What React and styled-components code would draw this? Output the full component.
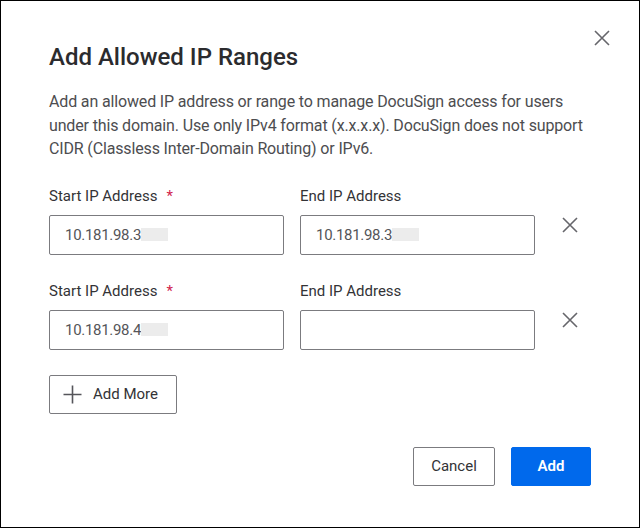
import React from "react";
import styled, { createGlobalStyle } from "styled-components";

const Global = createGlobalStyle`
  html, body { margin: 0; padding: 0; background: #fff; }
  body { font-family: Roboto, "Noto Sans", Arial, sans-serif; }
  * { box-sizing: border-box; }
`;

const Dialog = styled.div`
  position: relative;
  width: 640px;
  height: 528px;
  border: 1px solid #000;
  background: #fff;
  padding: 41px 48px 0 48px;
  display: flex;
  flex-direction: column;
`;

const CloseButton = styled.button`
  position: absolute;
  top: 27px;
  right: 27px;
  width: 20px;
  height: 20px;
  padding: 2px;
  border: 0;
  background: none;
  display: flex;
  align-items: center;
  justify-content: center;
  cursor: pointer;
`;

const Title = styled.h2`
  margin: 0;
  font-size: 24px;
  line-height: 31px;
  font-weight: 500;
  color: #2b2b2e;
`;

const Description = styled.p`
  margin: 17px -6px 0 0;
  font-size: 16px;
  line-height: 23.5px;
  letter-spacing: -0.15px;
  color: #4d4d50;
`;

const RangeGrid = styled.div`
  display: grid;
  grid-template-columns: 235px 235px 20px;
  column-gap: 16px;
  margin-top: ${(p) => p.$top}px;
`;

const Label = styled.label`
  font-size: 15px;
  line-height: 20px;
  color: #333336;
  margin-bottom: 9px;
  display: flex;
  align-items: center;
`;

const Required = styled.span`
  color: #d1244d;
  margin-left: 9px;
  font-size: 15px;
`;

const InputBox = styled.div`
  height: 40px;
  border: 1px solid #7b7b7f;
  border-radius: 2px;
  display: flex;
  align-items: center;
  padding: 0 15px;
  font-size: 15px;
  color: #555559;
  letter-spacing: -0.3px;
`;

const Redacted = styled.span`
  display: inline-block;
  width: 27px;
  height: 13px;
  background: #ececec;
`;

const RemoveButton = styled.button`
  grid-column: 3;
  grid-row: 2;
  align-self: start;
  width: 20px;
  height: 20px;
  margin-left: 9px;
  padding: 2px;
  border: 0;
  background: none;
  display: flex;
  align-items: center;
  justify-content: center;
  cursor: pointer;
`;

const AddMoreButton = styled.button`
  margin-top: 25px;
  align-self: flex-start;
  height: 39px;
  width: 128px;
  border: 1px solid #7b7b7f;
  border-radius: 2px;
  background: #fff;
  display: flex;
  align-items: center;
  gap: 11px;
  padding: 0 0 0 13px;
  font-family: inherit;
  font-size: 15px;
  color: #333336;
  cursor: pointer;
`;

const Footer = styled.div`
  margin-top: 33px;
  display: flex;
  justify-content: flex-end;
  gap: 16px;
`;

const FooterButton = styled.button`
  height: 39px;
  width: ${(p) => (p.$primary ? 80 : 82)}px;
  border-radius: 2px;
  border: 1px solid ${(p) => (p.$primary ? "#0069ec" : "#7b7b7f")};
  background: ${(p) => (p.$primary ? "#0069ec" : "#fff")};
  color: ${(p) => (p.$primary ? "#fff" : "#333336")};
  font-family: inherit;
  font-size: 15px;
  font-weight: ${(p) => (p.$primary ? 600 : 400)};
  cursor: pointer;
`;

const XIcon = ({ size = 16 }) => (
  <svg width={size} height={size} viewBox="0 0 16 16" fill="none">
    <path d="M1 1L15 15M15 1L1 15" stroke="#66666b" strokeWidth="1.6" />
  </svg>
);

const PlusIcon = () => (
  <svg width="19" height="19" viewBox="0 0 19 19" fill="none">
    <path d="M9.5 0.5V18.5M0.5 9.5H18.5" stroke="#55555a" strokeWidth="1.6" />
  </svg>
);

const rows = [
  { start: "10.181.98.3", end: "10.181.98.3", top: 25 },
  { start: "10.181.98.4", end: "", top: 26 },
];

const Field = ({ label, required }) => (
  <Label>
    {label}
    {required && <Required>*</Required>}
  </Label>
);

export default function App() {
  return (
    <>
      <Global />
      <Dialog>
        <CloseButton aria-label="Close">
          <XIcon />
        </CloseButton>
        <Title>Add Allowed IP Ranges</Title>
        <Description>
          Add an allowed IP address or range to manage DocuSign access for users
          under this domain. Use only IPv4 format (x.x.x.x). DocuSign does not
          support CIDR (Classless Inter-Domain Routing) or IPv6.
        </Description>
        {rows.map((r, i) => (
          <RangeGrid key={i} $top={r.top}>
            <Field label="Start IP Address" required />
            <Field label="End IP Address" />
            <span />
            <InputBox>
              {r.start}
              {r.start && <Redacted />}
            </InputBox>
            <InputBox>
              {r.end}
              {r.end && <Redacted />}
            </InputBox>
            <RemoveButton aria-label="Remove">
              <XIcon />
            </RemoveButton>
          </RangeGrid>
        ))}
        <AddMoreButton>
          <PlusIcon />
          Add More
        </AddMoreButton>
        <Footer>
          <FooterButton>Cancel</FooterButton>
          <FooterButton $primary>Add</FooterButton>
        </Footer>
      </Dialog>
    </>
  );
}
